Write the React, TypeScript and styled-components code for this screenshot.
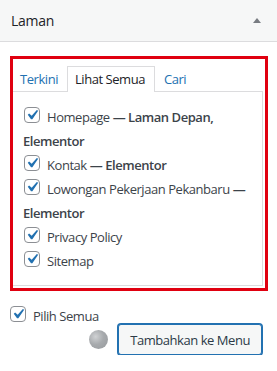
import styled, { createGlobalStyle } from 'styled-components';

const GlobalStyle = createGlobalStyle`
  body {
    margin: 0;
    background: #fff;
    font-family: 'Open Sans', 'Noto Sans', sans-serif;
    font-size: 13px;
    letter-spacing: -0.45px;
    color: #3c434a;
  }
`;

type Page = { title: string; suffix?: string };

const pages: Page[] = [
  { title: 'Homepage', suffix: 'Laman Depan, Elementor' },
  { title: 'Kontak', suffix: 'Elementor' },
  { title: 'Lowongan Pekerjaan Pekanbaru', suffix: 'Elementor' },
  { title: 'Privacy Policy' },
  { title: 'Sitemap' },
];

const tabs = ['Terkini', 'Lihat Semua', 'Cari'];

function Check() {
  return (
    <Box>
      <svg width="20" height="20" viewBox="0 0 20 20">
        <path d="M14.83 4.89l1.34.94-5.81 8.38H9.02L5.78 9.67l1.34-1.25 2.57 2.4z" fill="#2271b1" />
      </svg>
    </Box>
  );
}

export default function App() {
  return (
    <>
      <GlobalStyle />
      <Widget>
        <Header>
          <Title>Laman</Title>
          <Arrow />
        </Header>
        <Body>
          <Highlight>
            <TabList>
              {tabs.map((t) => (
                <Tab key={t} active={t === 'Lihat Semua'}>
                  {t}
                </Tab>
              ))}
            </TabList>
            <Panel>
              {pages.map((p) => (
                <Item key={p.title}>
                  <Check />
                  {p.title}
                  {p.suffix && (
                    <>
                      {' '}
                      <Post>— {p.suffix}</Post>
                    </>
                  )}
                </Item>
              ))}
            </Panel>
          </Highlight>
          <Footer>
            <SelectAll>
              <Check />
              Pilih Semua
            </SelectAll>
            <Actions>
              <Spinner />
              <Button>Tambahkan ke Menu</Button>
            </Actions>
          </Footer>
        </Body>
      </Widget>
    </>
  );
}

const Widget = styled.div`
  width: 277px;
`;

const Header = styled.div`
  height: 41px;
  background: #f6f7f7;
  border-bottom: 1px solid #dcdcde;
  display: flex;
  align-items: center;
  justify-content: space-between;
  padding: 0 16px 0 11px;
`;

const Title = styled.span`
  font-size: 14px;
  letter-spacing: -0.3px;
  color: #1d2327;
`;

const Arrow = styled.span`
  width: 0;
  height: 0;
  border-left: 4px solid transparent;
  border-right: 4px solid transparent;
  border-bottom: 5px solid #787c82;
`;

const Body = styled.div`
  padding: 14px 9px 0 10px;
`;

const Highlight = styled.div`
  border: 3px solid #e00010;
  padding: 7px 2px 2px 0;
`;

const TabList = styled.div`
  display: flex;
  align-items: flex-end;
`;

const Tab = styled.div<{ active?: boolean }>`
  height: 25px;
  line-height: 24px;
  padding: 0 ${({ active }) => (active ? '9px' : '6px')} 0 ${({ active }) => (active ? '7px' : '6px')};
  color: ${({ active }) => (active ? '#1d2327' : '#2271b1')};
  background: ${({ active }) => (active ? '#fff' : 'transparent')};
  border: 1px solid ${({ active }) => (active ? '#dcdcde' : 'transparent')};
  border-bottom: none;
  margin-bottom: -1px;
  position: relative;
  margin-right: 2px;
`;

const Panel = styled.div`
  border: 1px solid #dcdcde;
  border-left: none;
  padding: 13px 6px 12px 10px;
`;

const Item = styled.div`
  line-height: 24px;
`;

const Box = styled.span`
  display: inline-flex;
  align-items: center;
  justify-content: center;
  vertical-align: -3px;
  width: 14px;
  height: 14px;
  border: 1px solid #8c8f94;
  border-radius: 4px;
  background: #fff;
  margin: 0 7px 0 1px;
  overflow: visible;

  svg {
    flex: none;
    margin: -3px;
  }
`;

const Post = styled.span`
  font-weight: 600;
`;

const Footer = styled.div`
  padding: 13px 5px 0 0;
`;

const SelectAll = styled.div`
  line-height: 24px;
  margin-left: -1px;
`;

const Actions = styled.div`
  display: flex;
  justify-content: flex-end;
  align-items: center;
  gap: 10px;
  margin-top: -4px;
`;

const Spinner = styled.span`
  width: 19px;
  height: 19px;
  border-radius: 50%;
  background: radial-gradient(circle at 35% 35%, #d0d2d4 0, #a7aaad 45%, #96999c 100%);
`;

const Button = styled.button`
  height: 31px;
  padding: 0 11px;
  font-family: inherit;
  font-size: 13px;
  letter-spacing: -0.45px;
  color: #2c3a47;
  background: #f6f7f7;
  border: 1px solid #2271b1;
  box-shadow: 0 0 0 1px #2271b1;
  border-radius: 3px;
  margin-right: 1px;
`;
